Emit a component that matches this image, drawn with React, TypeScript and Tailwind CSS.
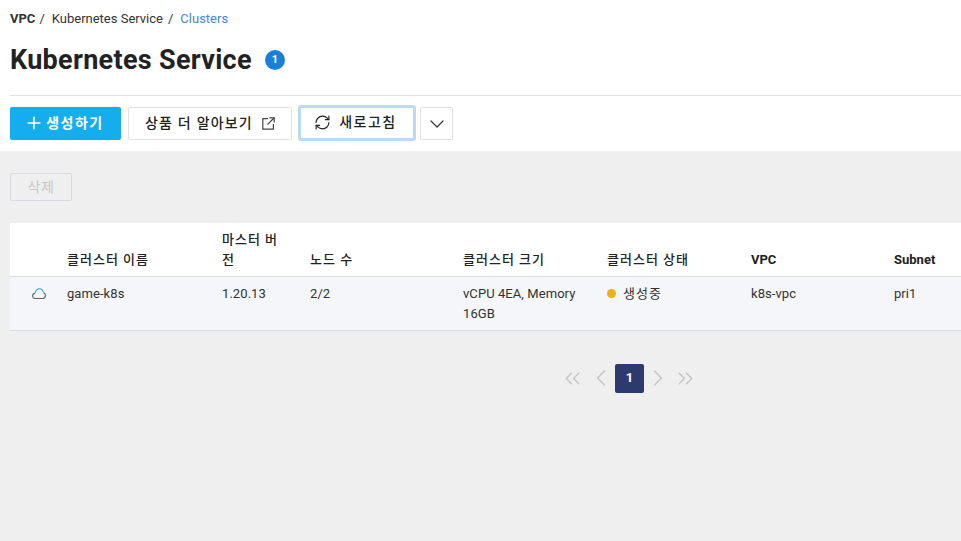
import { ChevronDown, ChevronLeft, ChevronRight, ChevronsLeft, ChevronsRight, Plus, RefreshCw } from "lucide-react";

const font = "font-['Roboto','Noto_Sans_CJK_KR',sans-serif]";

const columns = ["w-[47px]", "w-[155px]", "w-[88px]", "w-[153px]", "w-[144px]", "w-[144px]", "w-[143px]", "w-[120px]"];

function OpenIcon() {
  return (
    <svg width="13" height="13" viewBox="0 0 13 13" fill="none" stroke="#444444" strokeWidth="1.2">
      <path d="M6 1.6H.8v10.6h10.6V7" />
      <path d="M7.4 .8h4.8v4.8" />
      <path d="M12 1 5.4 7.6" />
    </svg>
  );
}

function CloudIcon() {
  return (
    <svg width="14" height="11" viewBox="0 0 14 11" fill="none" strokeWidth="1.1">
      <path d="M2.9 5.4C1.6 5.6 .6 6.6 .6 8c0 1.3 .9 2.5 2.6 2.5h7.6c1.5 0 2.6-1.3 2.6-2.9 0-1.6-.8-2.7-2-3" stroke="#5c6670" />
      <path d="M2.9 5.4C3.6 2.6 5.6 .8 7.6 .8c2.2 0 3.3 1.8 3.8 3.8" stroke="#3f9fdc" />
    </svg>
  );
}

export default function App() {
  return (
    <div className={`${font} w-[961px] h-[541px] overflow-hidden bg-[#efefef] text-[#222222]`}>
      <div className="bg-white h-[151px] pl-[10px]">
        {/* Breadcrumb */}
        <div className="flex items-center h-[37px] text-[13px] text-[#333333]">
          <span className="font-bold">VPC</span>
          <span className="ml-[4px]">/</span>
          <span className="ml-[7px]">Kubernetes Service</span>
          <span className="ml-[5px]">/</span>
          <span className="ml-[7px] text-[#4a86d8]">Clusters</span>
        </div>

        {/* Title */}
        <div className="flex items-center h-[46px]">
          <h1 className="mt-px text-[27px] tracking-[0.3px] font-bold leading-none text-[#222222]">Kubernetes Service</h1>
          <span className="ml-[13px] flex items-center justify-center w-[20px] h-[20px] rounded-full bg-[#1a7fdb] text-white text-[11px] font-bold">
            1
          </span>
        </div>

        <div className="mt-[12px] h-px bg-[#e1e1e1]" />

        {/* Toolbar */}
        <div className="flex items-center mt-[11px]">
          <button className="flex items-center justify-center gap-[2px] pr-[3px] pb-px w-[111px] h-[33px] rounded-[2px] bg-[#14aeef] text-white text-[14px] tracking-[1.5px] font-bold">
            <Plus size={20} strokeWidth={1.8} />
            생성하기
          </button>
          <button className="ml-[7px] flex items-center justify-center gap-[9px] pb-px w-[164px] h-[33px] rounded-[2px] bg-white border border-[#e1e1e1] text-[14px] tracking-[1.2px] font-medium">
            상품 더 알아보기
            <OpenIcon />
          </button>
          <button className="ml-[6px] flex items-center justify-center gap-[8px] pr-[3px] pb-px w-[118px] h-[36px] -mt-[2px] -mb-px rounded-[3px] bg-white border-[3px] border-[#bcd9f5] text-[14px] tracking-[1.5px] font-medium">
            <RefreshCw size={17} strokeWidth={1.6} />
            새로고침
          </button>
          <button className="ml-[4px] flex items-center justify-center w-[33px] h-[33px] rounded-[2px] bg-white border border-[#e1e1e1]">
            <ChevronDown size={24} strokeWidth={1.2} className="text-[#333333]" />
          </button>
        </div>
      </div>

      <div className="pl-[10px]">
        <button className="mt-[22px] w-[62px] h-[28px] rounded-[2px] border border-[#d9dbe2] text-[14px] tracking-[0.5px] text-[#c8c8c8]">
          삭제
        </button>

        {/* Table */}
        <table className="mt-[22px] w-[994px] table-fixed border-collapse text-[13px] leading-[20px] bg-white">
          <colgroup>
            {columns.map((w, i) => (
              <col key={i} className={w} />
            ))}
          </colgroup>
          <thead>
            <tr className="border-b border-[#dddddd] text-left align-bottom h-[53px]">
              <th />
              <th className="px-[10px] pb-[6px] font-medium tracking-[1px]">클러스터 이름</th>
              <th className="px-[10px] pb-[6px] font-medium tracking-[1px]">마스터 버전</th>
              <th className="px-[10px] pb-[6px] font-medium tracking-[1px]">노드 수</th>
              <th className="px-[10px] pb-[6px] font-medium tracking-[1px]">클러스터 크기</th>
              <th className="px-[10px] pb-[6px] font-medium tracking-[1px]">클러스터 상태</th>
              <th className="px-[10px] pb-[6px] font-bold">VPC</th>
              <th className="px-[10px] pb-[6px] font-bold">Subnet</th>
            </tr>
          </thead>
          <tbody>
            <tr className="bg-[#f4f6f9] border-b border-[#dddddd] align-top h-[54px] text-[#333333] tracking-[0.07px]">
              <td className="pl-[22px] pt-[11px]">
                <CloudIcon />
              </td>
              <td className="px-[10px] pt-[7px]">game-k8s</td>
              <td className="px-[10px] pt-[7px]">1.20.13</td>
              <td className="px-[10px] pt-[7px]">2/2</td>
              <td className="px-[10px] pt-[7px]">vCPU 4EA, Memory 16GB</td>
              <td className="px-[10px] pt-[7px]">
                <div className="flex items-center gap-[7px] tracking-[1px]">
                  <span className="w-[9px] h-[9px] rounded-full bg-[#eeb111]" />
                  생성중
                </div>
              </td>
              <td className="px-[10px] pt-[7px]">k8s-vpc</td>
              <td className="px-[10px] pt-[7px]">pri1</td>
            </tr>
          </tbody>
        </table>

        {/* Pagination */}
        <div className="flex items-center mt-[33px] ml-[550px] text-[#c4c4c4]">
          <ChevronsLeft size={25} strokeWidth={1.3} />
          <ChevronLeft size={28} strokeWidth={1.2} className="ml-[2px]" />
          <span className="flex items-center justify-center w-[29px] h-[29px] rounded-[2px] bg-[#2d3a6e] text-white text-[13px] font-bold">
            1
          </span>
          <ChevronRight size={28} strokeWidth={1.2} />
          <ChevronsRight size={25} strokeWidth={1.3} className="ml-px" />
        </div>
      </div>
    </div>
  );
}
